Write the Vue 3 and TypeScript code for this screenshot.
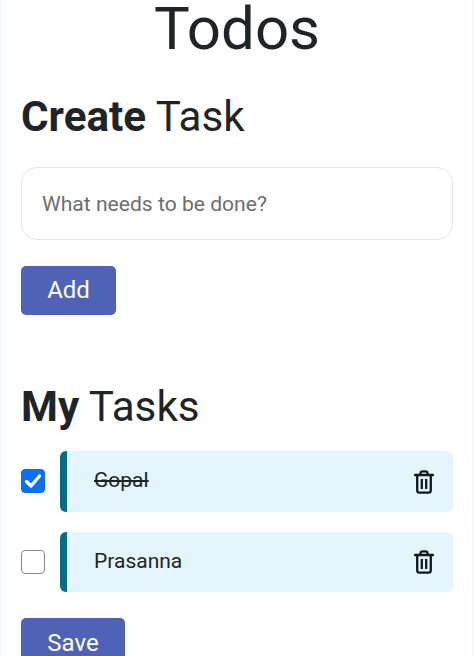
<script setup lang="ts">
import { ref } from 'vue'

interface Task {
  id: number
  name: string
  done: boolean
}

const draft = ref('')
const tasks = ref<Task[]>([
  { id: 1, name: 'Gopal', done: true },
  { id: 2, name: 'Prasanna', done: false },
])
</script>

<template>
  <main class="page">
    <h1 class="title">Todos</h1>

    <section class="create">
      <h2 class="heading"><strong>Create</strong> Task</h2>
      <input v-model="draft" class="field" type="text" placeholder="What needs to be done?" />
      <button class="btn add" type="button">Add</button>
    </section>

    <section class="list">
      <h2 class="heading"><strong>My</strong> Tasks</h2>
      <div v-for="task in tasks" :key="task.id" class="row">
        <label class="check" :class="{ on: task.done }">
          <input v-model="task.done" type="checkbox" />
          <svg v-if="task.done" viewBox="0 0 24 24" width="24" height="24" aria-hidden="true">
            <path d="M5.500 12.500 10 17l8.500-10" fill="none" stroke="#fff" stroke-width="3.400" stroke-linecap="round" stroke-linejoin="round" />
          </svg>
        </label>
        <div class="task">
          <span class="name" :class="{ done: task.done }">{{ task.name }}</span>
          <svg class="trash" viewBox="0 0 20 24" width="20" height="24" aria-hidden="true">
            <g fill="none" stroke="#111a20" stroke-width="2.300">
              <path d="M1 5h18" stroke-linecap="round" />
              <path d="M6.500 5V3.200C6.500 2 7.300 1.400 8.500 1.400h3c1.200 0 2 .6 2 1.800V5" />
              <path d="M3.200 5v15.300C3.200 21.800 4 22.700 5.500 22.700h9c1.500 0 2.300-.9 2.300-2.400V5" />
              <path d="M7.800 9v10M12.200 9v10" />
            </g>
          </svg>
        </div>
      </div>
      <button class="btn save" type="button">Save</button>
    </section>
  </main>
</template>

<style>
html,
body {
  margin: 0;
  height: 100%;
  overflow: hidden;
  background: #fff;
}
</style>

<style scoped>
.page {
  box-sizing: border-box;
  height: 656px;
  overflow: hidden;
  padding: 0 19px;
  border-left: 2px solid #f1f9fe;
  border-right: 2px solid #f1f9fe;
  font-family: Roboto, "Liberation Sans", sans-serif;
  color: #1f2429;
  background: #fff;
}
.title {
  margin: 0;
  height: 57px;
  line-height: 57px;
  font-size: 60px;
  font-weight: 400;
  text-align: center;
}
.heading {
  margin: 0;
  font-size: 42.200px;
  line-height: 48px;
  font-weight: 400;
}
.heading strong {
  font-weight: 700;
}
.create {
  padding-top: 36px;
}
.field {
  display: block;
  box-sizing: border-box;
  width: 100%;
  height: 73px;
  margin-top: 26px;
  padding: 0 20px;
  border: 1.500px solid #e3e5e7;
  border-radius: 16px;
  background: #fff;
  font: 400 21.100px Roboto, "Liberation Sans", sans-serif;
  color: #1f2429;
  outline: none;
}
.field::placeholder {
  color: #6e6e6e;
  opacity: 1;
}
.btn {
  display: block;
  box-sizing: border-box;
  height: 49px;
  border: 0;
  border-radius: 5px;
  background: #4e63b8;
  color: #fff;
  font: 400 24px Roboto, "Liberation Sans", sans-serif;
}
.add {
  width: 95px;
  height: 48.500px;
  margin-top: 26px;
}
.list {
  padding-top: 68.500px;
}
.row {
  display: flex;
  align-items: center;
  gap: 15px;
  margin-top: 20px;
}
.check {
  position: relative;
  flex: none;
  box-sizing: border-box;
  width: 24px;
  height: 24px;
  border: 1.500px solid #85898d;
  border-radius: 4px;
  background: #fff;
}
.check.on {
  border-color: #0d6efd;
  background: #0d6efd;
}
.check input {
  position: absolute;
  inset: 0;
  margin: 0;
  opacity: 0;
}
.check svg {
  position: absolute;
  top: -1.500px;
  left: -1.500px;
}
.task {
  flex: 1;
  display: flex;
  align-items: center;
  justify-content: space-between;
  box-sizing: border-box;
  height: 60.500px;
  padding: 0 19px 0 27px;
  border-left: 7px solid #056d86;
  border-radius: 6px;
  background: #e4f5fd;
}
.name {
  font-size: 21px;
  line-height: 58px;
  height: 58px;
  margin-bottom: 2px;
  color: #1f2429;
}
.name.done {
  text-decoration: line-through;
}
.trash {
  display: block;
  margin-top: 1px;
}
.save {
  width: 104px;
  margin-top: 26px;
}
</style>
